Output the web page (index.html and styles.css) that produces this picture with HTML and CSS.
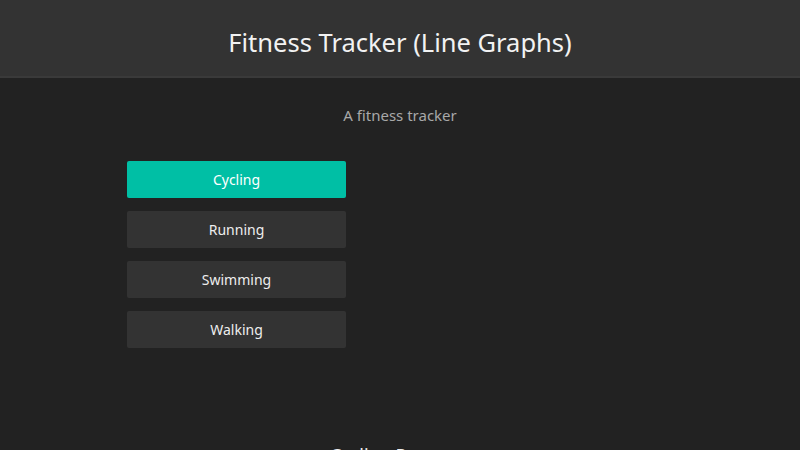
FILE: index.html
```html
<!DOCTYPE html>
<html>
<head>
<meta charset="utf-8">
<link rel="stylesheet" href="styles.css">
</head>
<body>
<header class="header"><h1 class="title">Fitness Tracker (Line Graphs)</h1></header>
<main class="main">
  <p class="subtitle">A fitness tracker</p>
  <div class="layout">
    <nav class="menu">
      <button class="btn active">Cycling</button>
      <button class="btn">Running</button>
      <button class="btn">Swimming</button>
      <button class="btn">Walking</button>
    </nav>
    <section class="panel"></section>
  </div>
  <h2 class="chart-title">Cycling Progress</h2>
</main>
</body>
</html>
```
FILE: styles.css
```css
* { box-sizing: border-box; }
html, body { margin: 0; padding: 0; }
body {
  background: #222222;
  color: #eeeeee;
  font-family: "Noto Sans", "Open Sans", sans-serif;
  overflow: hidden;
}
.header {
  background: #333333;
  height: 78px;
  padding-top: 8px;
  border-bottom: 2px solid #3a3a3a;
  display: flex;
  align-items: center;
  justify-content: center;
}
.title {
  margin: 0;
  font-weight: 400;
  font-size: 25.5px;
  color: #f2f2f2;
}
.main { display: flex; flex-direction: column; align-items: center; }
.subtitle {
  margin: 27px 0 0;
  font-size: 15px;
  color: #a8a8a8;
}
.layout {
  width: 546px;
  margin-top: 36px;
  display: flex;
  gap: 20px;
}
.menu {
  width: 219px;
  display: flex;
  flex-direction: column;
  gap: 13px;
}
.btn {
  height: 37px;
  border: none;
  border-radius: 2px;
  background: #333333;
  color: #eeeeee;
  font-family: inherit;
  font-size: 14px;
  padding: 0;
}
.btn.active { background: #00bfa5; color: #ffffff; }
.chart-title {
  margin: 95px 0 0;
  font-size: 18px;
  font-weight: 400;
  color: #eeeeee;
}
```
